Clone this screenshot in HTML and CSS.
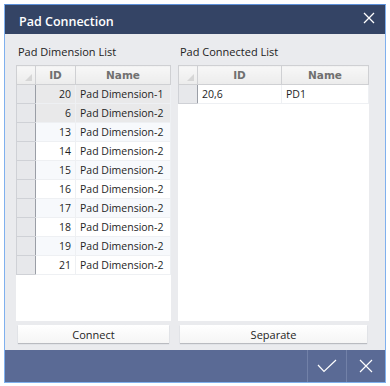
FILE: index.html
```html
<!DOCTYPE html>
<html lang="en">
<head>
    <meta charset="UTF-8">
    <title>Pad Connection</title>
    <link rel="stylesheet" href="styles.css">
</head>
<body>
    <div class="dialog">
        <!-- Title bar -->
        <div class="titlebar">
            <span class="title">Pad Connection</span>
            <svg class="close" width="12" height="12" viewBox="0 0 12 12">
                <path d="M1 1 L11 11 M11 1 L1 11" stroke="#fff" stroke-width="1.3"/>
            </svg>
        </div>

        <div class="content">
            <!-- Left list -->
            <div class="panel left">
                <div class="label">Pad Dimension List</div>
                <div class="grid">
                    <table>
                        <thead>
                            <tr>
                                <th class="ind"><span class="corner"></span></th>
                                <th class="id-col">ID</th>
                                <th>Name</th>
                            </tr>
                        </thead>
                        <tbody>
                            <tr class="sel"><td class="ind"></td><td class="num">20</td><td>Pad Dimension-1</td></tr>
                            <tr class="sel"><td class="ind"></td><td class="num">6</td><td>Pad Dimension-2</td></tr>
                            <tr class="alt"><td class="ind"></td><td class="num">13</td><td>Pad Dimension-2</td></tr>
                            <tr><td class="ind"></td><td class="num">14</td><td>Pad Dimension-2</td></tr>
                            <tr class="alt"><td class="ind"></td><td class="num">15</td><td>Pad Dimension-2</td></tr>
                            <tr><td class="ind"></td><td class="num">16</td><td>Pad Dimension-2</td></tr>
                            <tr class="alt"><td class="ind"></td><td class="num">17</td><td>Pad Dimension-2</td></tr>
                            <tr><td class="ind"></td><td class="num">18</td><td>Pad Dimension-2</td></tr>
                            <tr class="alt"><td class="ind"></td><td class="num">19</td><td>Pad Dimension-2</td></tr>
                            <tr><td class="ind"></td><td class="num">21</td><td>Pad Dimension-2</td></tr>
                        </tbody>
                    </table>
                </div>
                <button class="btn">Connect</button>
            </div>

            <!-- Right list -->
            <div class="panel right">
                <div class="label">Pad Connected List</div>
                <div class="grid">
                    <table>
                        <thead>
                            <tr>
                                <th class="ind"><span class="corner"></span></th>
                                <th class="id-wide">ID</th>
                                <th>Name</th>
                            </tr>
                        </thead>
                        <tbody>
                            <tr><td class="ind cur"></td><td>20,6</td><td>PD1</td></tr>
                        </tbody>
                    </table>
                </div>
                <button class="btn">Separate</button>
            </div>
        </div>

        <!-- Footer -->
        <div class="footer">
            <div class="fbtn">
                <svg width="20" height="14" viewBox="0 0 20 14">
                    <path d="M1 6 L7 12.5 L19 1" stroke="#fff" stroke-width="1.2" fill="none"/>
                </svg>
            </div>
            <div class="fbtn">
                <svg width="14" height="14" viewBox="0 0 14 14">
                    <path d="M1 1 L13 13 M13 1 L1 13" stroke="#fff" stroke-width="1.2"/>
                </svg>
            </div>
        </div>
    </div>
</body>
</html>
```

FILE: styles.css
```css
body {
    margin: 0;
    background: #ffffff;
    font-family: "Open Sans", sans-serif;
    font-size: 11px;
    color: #1e1e1e;
}
.dialog {
    margin: 4px;
    width: 380px;
    border: 1px solid #7fb0ee;
    border-top-color: #5c8fd8;
    background: #eaebee;
    display: flex;
    flex-direction: column;
}
.titlebar {
    height: 29px;
    background: #344465;
    display: flex;
    align-items: center;
    justify-content: space-between;
    padding: 0 10px 0 14px;
}
.title {
    color: #ffffff;
    font-size: 12.5px;
    font-weight: 600;
    padding-top: 3px;
}
.close {
    margin-top: -3px;
}
.content {
    height: 316px;
    display: flex;
    gap: 7px;
    padding: 0 16px 0 11px;
    box-sizing: border-box;
}
.panel {
    display: flex;
    flex-direction: column;
}
.panel.left {
    width: 155px;
}
.panel.right {
    width: 191px;
}
.label {
    font-size: 11px;
    color: #222;
    height: 31px;
    line-height: 36px;
    padding-left: 2px;
}
.grid {
    height: 256px;
    background: #ffffff;
}
table {
    width: 100%;
    border-collapse: collapse;
    table-layout: fixed;
}
th {
    height: 18px;
    padding: 0;
    background: linear-gradient(#f7f7f7, #ececec);
    border: 1px solid #cfd0d3;
    color: #707070;
    font-family: "DejaVu Sans", sans-serif;
    font-size: 10.5px;
    font-weight: bold;
    text-align: center;
}
th.ind {
    width: 18px;
    position: relative;
}
th.id-col {
    width: 39px;
}
th.id-wide {
    width: 83px;
}
.corner {
    position: absolute;
    right: 3px;
    bottom: 3px;
    width: 0;
    height: 0;
    border-left: 7px solid transparent;
    border-bottom: 7px solid #d6d6d6;
}
td {
    height: 18px;
    padding: 0 4px;
    border-bottom: 1px solid #eef0f3;
    border-right: 1px solid #eef0f3;
    white-space: nowrap;
    overflow: hidden;
    font-size: 10.5px;
}
td.ind {
    background: #e7e8eb;
    border-right: 1px solid #9a9ea6;
    border-bottom: 1px solid #cfd1d6;
    border-left: 1px solid #cfd1d6;
    padding: 0;
}
td.num {
    text-align: right;
}
tr.alt td {
    background: #f7f9fc;
}
tr.sel td {
    background: #e9e9ea;
}
tr.alt td.ind, tr.sel td.ind {
    background: #e7e8eb;
}
.btn {
    margin: 4px 2px 0;
    height: 18px;
    border: none;
    background: linear-gradient(#ffffff, #f5f5f5);
    box-shadow: 0 1px 1px #b9bbc0;
    font-family: "Open Sans", sans-serif;
    font-size: 11px;
    color: #1e1e1e;
    padding: 0;
}
.footer {
    height: 32px;
    background: #5a6a95;
    display: flex;
    justify-content: flex-end;
}
.fbtn {
    width: 38px;
    border-left: 1px solid #7281a8;
    display: flex;
    align-items: center;
    justify-content: center;
}
```
